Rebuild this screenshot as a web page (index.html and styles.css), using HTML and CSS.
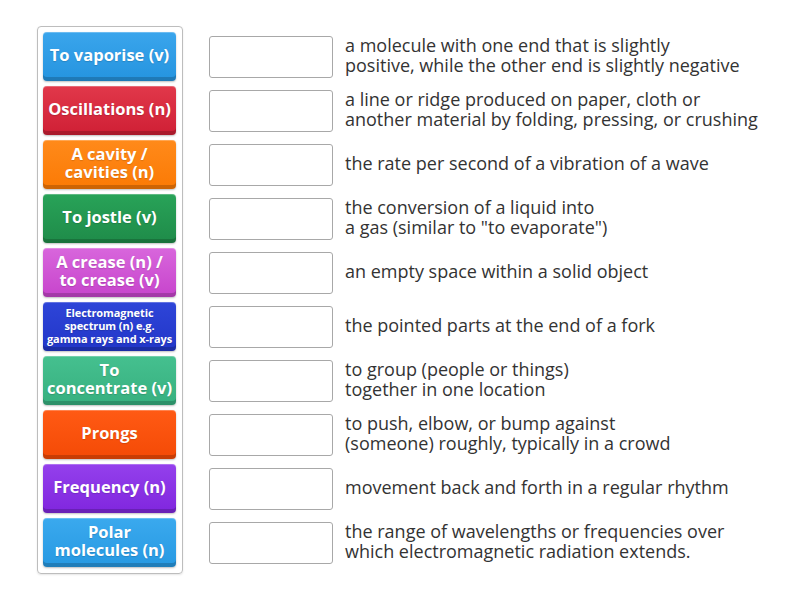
FILE: index.html
```html
<!DOCTYPE html>
<html>
<head>
<meta charset="utf-8">
<link rel="stylesheet" href="styles.css">
</head>
<body>
<div class="game">
  <div class="tray">
    <div class="tile c1">To vaporise (v)</div>
    <div class="tile c2">Oscillations (n)</div>
    <div class="tile c3">A cavity /<br>cavities (n)</div>
    <div class="tile c4">To jostle (v)</div>
    <div class="tile c5">A crease (n) /<br>to crease (v)</div>
    <div class="tile c6 small">Electromagnetic<br>spectrum (n) e.g.<br>gamma rays and x-rays</div>
    <div class="tile c7">To<br>concentrate (v)</div>
    <div class="tile c8">Prongs</div>
    <div class="tile c9">Frequency (n)</div>
    <div class="tile c10">Polar<br>molecules (n)</div>
  </div>
  <div class="rows">
    <div class="row"><div class="slot"></div><div class="def">a molecule with one end that is slightly<br>positive, while the other end is slightly negative</div></div>
    <div class="row"><div class="slot"></div><div class="def">a line or ridge produced on paper, cloth or<br>another material by folding, pressing, or crushing</div></div>
    <div class="row"><div class="slot"></div><div class="def">the rate per second of a vibration of a wave</div></div>
    <div class="row"><div class="slot"></div><div class="def">the conversion of a liquid into<br>a gas (similar to "to evaporate")</div></div>
    <div class="row"><div class="slot"></div><div class="def">an empty space within a solid object</div></div>
    <div class="row"><div class="slot"></div><div class="def">the pointed parts at the end of a fork</div></div>
    <div class="row"><div class="slot"></div><div class="def">to group (people or things)<br>together in one location</div></div>
    <div class="row"><div class="slot"></div><div class="def">to push, elbow, or bump against<br>(someone) roughly, typically in a crowd</div></div>
    <div class="row"><div class="slot"></div><div class="def">movement back and forth in a regular rhythm</div></div>
    <div class="row"><div class="slot"></div><div class="def">the range of wavelengths or frequencies over<br>which electromagnetic radiation extends.</div></div>
  </div>
</div>
</body>
</html>
```
FILE: styles.css
```css
html, body {
  margin: 0;
  padding: 0;
  background: #ffffff;
}
body {
  font-family: "Open Sans", "Liberation Sans", sans-serif;
  width: 800px;
  height: 600px;
  overflow: hidden;
}
.game {
  display: flex;
  align-items: flex-start;
  padding: 26px 0 0 37px;
}
.tray {
  width: 133px;
  border: 1px solid #bdbdbd;
  border-radius: 4px;
  padding: 5px 6px 6px 5px;
  display: flex;
  flex-direction: column;
  gap: 5px;
  box-shadow: 0 1px 2px rgba(0,0,0,0.1);
}
.tile {
  height: 49px;
  border-radius: 4px;
  color: #ffffff;
  font-weight: 700;
  font-size: 16.5px;
  line-height: 18px;
  display: flex;
  align-items: center;
  justify-content: center;
  text-align: center;
  box-sizing: border-box;
  padding-bottom: 3px;
  white-space: nowrap;
  box-shadow: inset 0 -4px 0 rgba(0,0,0,0.18), inset 0 1px 0 rgba(255,255,255,0.25), 0 1px 2px rgba(0,0,0,0.25);
  text-shadow: 0 1px 1px rgba(0,0,0,0.15);
}
.tile.small {
  font-size: 11px;
  line-height: 13px;
  letter-spacing: -0.1px;
}
.c1 { background: linear-gradient(#3aa5ec, #2594df); }
.c2 { background: linear-gradient(#e1384a, #cf1f35); }
.c3 { background: linear-gradient(#ff8a1a, #fb7a05); }
.c4 { background: linear-gradient(#28a358, #1f8b49); }
.c5 { background: linear-gradient(#d866dc, #c744cc); }
.c6 { background: linear-gradient(#2e45d8, #2236c8); }
.c7 { background: linear-gradient(#45c08f, #37b07f); }
.c8 { background: linear-gradient(#ff5a14, #f44a06); }
.c9 { background: linear-gradient(#9440ec, #8026de); }
.c10 { background: linear-gradient(#3aa9ee, #2799e2); }
.rows {
  display: flex;
  flex-direction: column;
  gap: 13px;
  padding: 10px 0 0 26px;
}
.row {
  display: flex;
  align-items: center;
  height: 41px;
}
.slot {
  width: 122px;
  height: 40px;
  border: 1px solid #a8a8a8;
  border-radius: 3px;
  background: #fff;
  flex: none;
}
.def {
  margin-left: 12px;
  margin-bottom: 4px;
  font-size: 18px;
  line-height: 20px;
  color: #333333;
  white-space: nowrap;
}
```
